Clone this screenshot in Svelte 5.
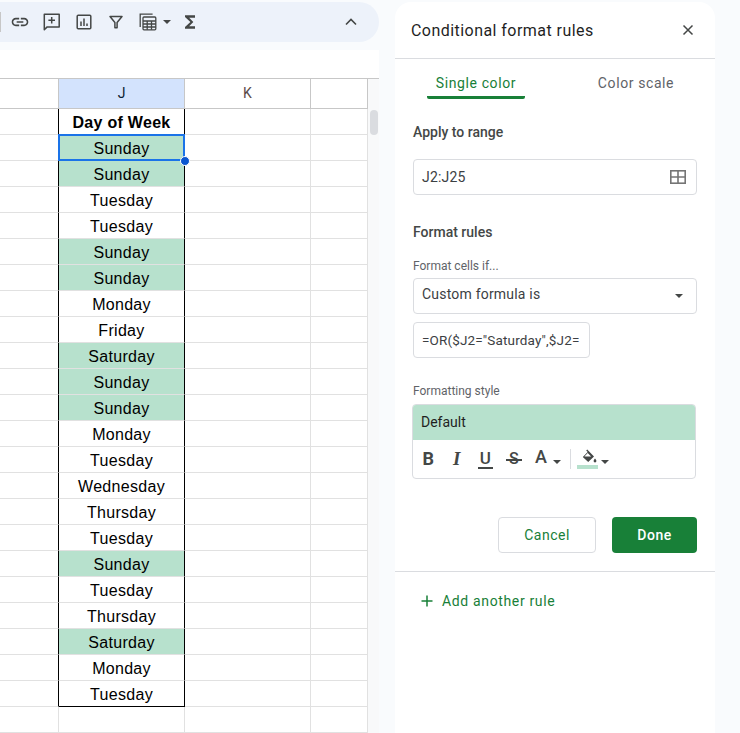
<script>
	const rows = [
		["Sunday", true], ["Sunday", true], ["Tuesday", false], ["Tuesday", false],
		["Sunday", true], ["Sunday", true], ["Monday", false], ["Friday", false],
		["Saturday", true], ["Sunday", true], ["Sunday", true], ["Monday", false],
		["Tuesday", false], ["Wednesday", false], ["Thursday", false], ["Tuesday", false],
		["Sunday", true], ["Tuesday", false], ["Thursday", false], ["Saturday", true],
		["Monday", false], ["Tuesday", false]
	];
</script>

<div class="page">
	<div class="left">
		<div class="toolbar">
			<span class="sep"></span>
			<span class="slot">
				<svg width="20" height="20" viewBox="0 0 24 24" fill="#444746"><path d="M3.9 12c0-1.71 1.39-3.1 3.1-3.1h4V7H7c-2.76 0-5 2.24-5 5s2.24 5 5 5h4v-1.9H7c-1.71 0-3.1-1.39-3.1-3.1zM8 13h8v-2H8v2zm9-6h-4v1.9h4c1.71 0 3.1 1.39 3.1 3.1s-1.39 3.1-3.1 3.1h-4V17h4c2.76 0 5-2.24 5-5s-2.24-5-5-5z"/></svg>
			</span>
			<span class="slot">
				<svg width="18" height="18" viewBox="0 0 18 18" fill="none" stroke="#444746" stroke-width="1.5"><path d="M1.3 1.3h14.9v12.6H4.2l-2.9 2.9z" stroke-linejoin="round"/><path d="M8.7 4v6.6M5.4 7.3H12"/></svg>
			</span>
			<span class="slot">
				<svg width="18" height="18" viewBox="0 0 18 18" fill="none" stroke="#444746" stroke-width="1.5"><rect x="2.2" y="2.2" width="13.6" height="13.6" rx="1"/><path d="M6 8.5V13M9 5.5V13M12 10.5V13"/></svg>
			</span>
			<span class="slot">
				<svg width="18" height="18" viewBox="0 0 18 18" fill="none" stroke="#444746" stroke-width="1.5"><path d="M3 3.6h12L10.1 9.4v5.4H7.9V9.4z" stroke-linejoin="round"/></svg>
			</span>
			<span class="slot wide">
				<svg width="18" height="18" viewBox="0 0 18 18" fill="none" stroke="#444746" stroke-width="1.3"><path d="M1.2 14V1.2h12.4"/><rect x="4" y="4" width="12.8" height="12.8" rx="1"/><path d="M4 8h12.8M4 11h12.8M4 14h12.8M8.2 8v8.8M12.5 8v8.8"/></svg>
				<span class="caret"></span>
			</span>
			<span class="slot">
				<svg width="20" height="20" viewBox="0 0 24 24" fill="#444746"><path d="M18 4H6v2l6.5 6L6 18v2h12v-3h-7l5-5-5-5h7z"/></svg>
			</span>
			<span class="slot end">
				<svg width="18" height="18" viewBox="0 0 18 18" fill="none" stroke="#444746" stroke-width="1.6"><path d="M4 11.5l5-5 5 5"/></svg>
			</span>
		</div>

		<div class="sheet">
			<div class="formula"></div>
			<div class="row head">
				<div class="cell"></div>
				<div class="cell picked">J</div>
				<div class="cell kay">K</div>
				<div class="cell"></div>
				<div class="track"></div>
			</div>
			<div class="row">
				<div class="cell black-r"></div>
				<div class="cell black-r title">Day of Week</div>
				<div class="cell"></div>
				<div class="cell"></div>
				<div class="track"><span class="thumb"></span></div>
			</div>
			{#each rows as r, i}
				<div class="row">
					<div class="cell black-r"></div>
					<div class="cell black-r" class:green={r[1]} class:active={i === 0} class:black-b={i === rows.length - 1}>{r[0]}</div>
					<div class="cell"></div>
					<div class="cell"></div>
					<div class="track"></div>
				</div>
			{/each}
			<div class="row">
				<div class="cell"></div>
				<div class="cell"></div>
				<div class="cell"></div>
				<div class="cell"></div>
				<div class="track"></div>
			</div>
		</div>
	</div>

	<div class="panel">
		<div class="top">
			<span class="heading">Conditional format rules</span>
			<svg width="12" height="12" viewBox="0 0 12 12" fill="none" stroke="#444746" stroke-width="1.5"><path d="M1.5 1.5l9 9M10.5 1.5l-9 9"/></svg>
		</div>

		<div class="tabs">
			<span class="tab on">Single color</span>
			<span class="tab">Color scale</span>
		</div>

		<div class="body">
			<div class="label">Apply to range</div>
			<div class="field range">
				<span>J2:J25</span>
				<svg width="16" height="14" viewBox="0 0 16 14" fill="none" stroke="#757575" stroke-width="1.6"><rect x="0.8" y="0.8" width="14.4" height="12.4"/><path d="M8 1v12M1 7h14"/></svg>
			</div>

			<div class="label rules">Format rules</div>
			<div class="small">Format cells if...</div>
			<div class="field select">
				<span>Custom formula is</span>
				<span class="caret"></span>
			</div>
			<div class="field formula-box">=OR($J2="Saturday",$J2=</div>

			<div class="small style">Formatting style</div>
			<div class="stylebox">
				<div class="preview">Default</div>
				<div class="fmt">
					<span class="fb b">B</span>
					<span class="fb i">I</span>
					<span class="fb u">U</span>
					<span class="fb s">S</span>
					<span class="fb a">A</span>
					<span class="caret small-caret"></span>
					<span class="fsep"></span>
					<span class="fill">
						<svg width="20" height="15" viewBox="0 0 20 15" fill="#444746"><path d="M9.2 0.5l-1 1 1.5 1.5-4.9 4.9 5.4 5.2 5.8-5.6zM9.7 4l3.4 3.5H6.4z"/><path d="M17 9.5c-.9 1.2-1.4 2-1.4 2.6a1.4 1.4 0 0 0 2.8 0c0-.6-.5-1.4-1.4-2.6z"/></svg>
						<span class="swatch"></span>
					</span>
					<span class="caret small-caret"></span>
				</div>
			</div>

			<div class="actions">
				<button class="cancel">Cancel</button>
				<button class="done">Done</button>
			</div>
		</div>

		<div class="add">
			<svg width="12" height="12" viewBox="0 0 12 12" fill="none" stroke="#188038" stroke-width="1.5"><path d="M6 .5v11M.5 6h11"/></svg>
			<span>Add another rule</span>
		</div>
	</div>
</div>

<style>
	:global(body) {
		margin: 0;
		background: #f9fbfd;
		overflow: hidden;
	}
	.page {
		display: flex;
		height: 733px;
		overflow: hidden;
		background: #f9fbfd;
		font-family: Roboto, "Liberation Sans", sans-serif;
	}
	.left {
		width: 379px;
		flex-shrink: 0;
	}
	.toolbar {
		display: flex;
		align-items: center;
		height: 40px;
		margin-top: 2px;
		background: #edf2fa;
		border-radius: 0 20px 20px 0;
	}
	.sep {
		width: 1px;
		height: 20px;
		background: #c7c7c7;
		margin-right: 3px;
	}
	.slot {
		display: flex;
		align-items: center;
		justify-content: center;
		width: 32px;
		height: 32px;
	}
	.slot.wide {
		width: 42px;
		justify-content: flex-start;
		padding-left: 7px;
		box-sizing: border-box;
		gap: 6px;
	}
	.slot.end {
		margin-left: auto;
		margin-right: 12px;
	}
	.caret {
		display: inline-block;
		width: 0;
		height: 0;
		border-left: 4px solid transparent;
		border-right: 4px solid transparent;
		border-top: 4px solid #444746;
	}

	.sheet {
		margin-top: 8px;
		background: #fff;
	}
	.formula {
		height: 28px;
	}
	.row {
		display: grid;
		grid-template-columns: 59px 126px 126px 57px 11px;
		height: 26px;
	}
	.row.head {
		border-top: 1px solid #c7c7c7;
		height: 30px;
	}
	.cell {
		box-sizing: border-box;
		display: flex;
		align-items: center;
		justify-content: center;
		padding-top: 2px;
		border-right: 1px solid #e1e1e1;
		border-bottom: 1px solid #e1e1e1;
		font-family: "Liberation Sans", Arial, sans-serif;
		font-size: 16px;
		letter-spacing: 0.3px;
		color: #000;
		position: relative;
	}
	.head .cell {
		padding-top: 0;
		padding-bottom: 2px;
		border-right-color: #c7c7c7;
		border-bottom-color: #c7c7c7;
		font-size: 14px;
		letter-spacing: 0;
		color: #444746;
		font-family: Roboto, sans-serif;
	}
	.head .cell.picked {
		background: #d3e3fd;
		color: #0b1d33;
	}
	.head .cell.kay {
		color: #5a4a48;
	}
	.black-r {
		border-right-color: #000;
	}
	.black-b {
		border-bottom-color: #000;
	}
	.title {
		font-weight: 700;
	}
	.green {
		background: #b7e1cd;
	}
	.active::after {
		content: "";
		position: absolute;
		left: -1px;
		top: -1px;
		right: -1px;
		bottom: -1px;
		border: 2px solid #1a73e8;
	}
	.active::before {
		content: "";
		position: absolute;
		right: -6px;
		bottom: -6px;
		width: 8px;
		height: 8px;
		border-radius: 50%;
		background: #0b57d0;
		border: 1px solid #fff;
		z-index: 1;
	}
	.track {
		background: #f8f9fa;
		position: relative;
	}
	.thumb {
		position: absolute;
		left: 2px;
		top: 1px;
		width: 8px;
		height: 25px;
		border-radius: 4px;
		background: #dadce0;
	}

	.panel {
		width: 320px;
		margin: 2px 0 0 16px;
		flex-shrink: 0;
		background: #fff;
		border-radius: 16px 16px 0 0;
	}
	.top {
		display: flex;
		align-items: center;
		justify-content: space-between;
		height: 56px;
		padding: 0 21px 0 16px;
		border-bottom: 1px solid #dadce0;
	}
	.heading {
		font-size: 16px;
		color: #1f1f1f;
		letter-spacing: 0.45px;
	}
	.tabs {
		display: flex;
		justify-content: space-between;
		padding: 0 30px 0 32px;
		height: 40px;
	}
	.tab {
		width: 98px;
		box-sizing: border-box;
		text-align: center;
		font-size: 14px;
		font-weight: 400;
		letter-spacing: 0.6px;
		color: #5f6368;
		padding-top: 16px;
		border-bottom: 3px solid transparent;
	}
	.tab.on {
		color: #188038;
		border-bottom-color: #188038;
		border-radius: 0 0 2px 2px;
	}
	.body {
		padding: 25px 18px 0;
		border-bottom: 1px solid #dadce0;
		height: 473px;
		box-sizing: border-box;
	}
	.label {
		font-size: 14px;
		font-weight: 500;
		color: #444746;
		line-height: 16px;
	}
	.field {
		box-sizing: border-box;
		height: 36px;
		border: 1px solid #dadce0;
		border-radius: 4px;
		display: flex;
		align-items: center;
		padding: 0 8px;
		font-size: 14px;
		letter-spacing: 0.2px;
		color: #3c4043;
	}
	.range {
		margin-top: 19px;
		justify-content: space-between;
		padding-right: 10px;
	}
	.rules {
		margin-top: 29px;
	}
	.small {
		font-size: 12px;
		line-height: 14px;
		color: #5f6368;
	}
	.rules + .small {
		margin-top: 19px;
	}
	.select {
		margin-top: 5px;
		justify-content: space-between;
		padding-right: 13px;
		padding-bottom: 4px;
	}
	.select .caret {
		margin-top: 3px;
	}
	.formula-box {
		width: 177px;
		margin-top: 8px;
		white-space: nowrap;
		overflow: hidden;
		font-size: 13.5px;
		letter-spacing: 0.15px;
	}
	.style {
		margin-top: 26px;
	}
	.stylebox {
		box-sizing: border-box;
		width: 284px;
		height: 75px;
		margin: 6px 0 0 -1px;
		border: 1px solid #dadce0;
		border-radius: 4px;
		overflow: hidden;
	}
	.preview {
		height: 35px;
		background: #b7e1cd;
		display: flex;
		align-items: center;
		padding-left: 8px;
		padding-bottom: 2px;
		box-sizing: border-box;
		font-size: 14px;
		color: #1f1f1f;
	}
	.fmt {
		display: flex;
		align-items: center;
		height: 38px;
		padding-left: 1px;
	}
	.fb {
		width: 28.5px;
		text-align: center;
		font-size: 18px;
		line-height: 20px;
		flex-shrink: 0;
		color: #444746;
		position: relative;
	}
	.fb.b {
		font-weight: 700;
	}
	.fb.i {
		font-family: "Liberation Serif", serif;
		font-style: italic;
		font-weight: 700;
		font-size: 19px;
	}
	.fb.u {
		font-weight: 500;
		font-size: 17px;
	}
	.fb.u::after {
		content: "";
		position: absolute;
		left: 7px;
		right: 7px;
		bottom: 0;
		height: 2px;
		background: #444746;
	}
	.fb.u {
		line-height: 18px;
		padding-bottom: 2px;
	}
	.fb.s {
		font-weight: 500;
		font-size: 16px;
	}
	.fb.s::after {
		content: "";
		position: absolute;
		left: 6px;
		right: 6px;
		top: 10px;
		height: 1.5px;
		background: #444746;
	}
	.fb.a {
		width: 26px;
		font-weight: 500;
		margin-top: -5px;
	}
	.small-caret {
		margin-top: 6px;
		margin-left: -1px;
	}
	.fsep {
		width: 1px;
		height: 20px;
		background: #dadce0;
		margin: 0 6px 0 9px;
	}
	.fill {
		display: flex;
		flex-direction: column;
		align-items: center;
		width: 21px;
		margin-right: 4px;
	}
	.swatch {
		width: 21px;
		height: 4px;
		background: #b7e1cd;
		margin-top: 1px;
	}
	.actions {
		display: flex;
		justify-content: flex-end;
		gap: 16px;
		margin-top: 38px;
	}
	button {
		height: 36px;
		border-radius: 4px;
		font-family: Roboto, sans-serif;
		font-size: 14px;
		letter-spacing: 0.5px;
		padding: 0;
	}
	.cancel {
		width: 98px;
		background: #fff;
		border: 1px solid #dadce0;
		color: #188038;
		font-weight: 400;
	}
	.done {
		width: 85px;
		background: #188038;
		border: none;
		color: #fff;
		font-weight: 500;
	}
	.add {
		display: flex;
		align-items: center;
		gap: 9px;
		padding: 21px 0 0 26px;
		font-size: 14px;
		font-weight: 400;
		letter-spacing: 0.65px;
		color: #188038;
	}
</style>
